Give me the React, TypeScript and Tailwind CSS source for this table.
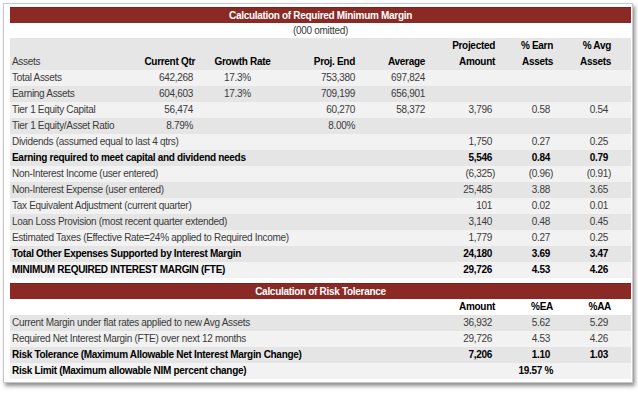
import React from "react";

type Row = {
  label: string;
  bold?: boolean;
  cq?: string;
  gr?: string;
  pe?: string;
  avg?: string;
  amt?: string;
  earn?: string;
  pavg?: string;
  span?: boolean;
};

const rows: Row[] = [
  { label: "Total Assets", cq: "642,268", gr: "17.3%", pe: "753,380", avg: "697,824" },
  { label: "Earning Assets", cq: "604,603", gr: "17.3%", pe: "709,199", avg: "656,901" },
  { label: "Tier 1 Equity Capital", cq: "56,474", pe: "60,270", avg: "58,372", amt: "3,796", earn: "0.58", pavg: "0.54" },
  { label: "Tier 1 Equity/Asset Ratio", cq: "8.79%", pe: "8.00%" },
  { label: "Dividends (assumed equal to last 4 qtrs)", span: true, amt: "1,750", earn: "0.27", pavg: "0.25" },
  { label: "Earning required to meet capital and dividend needs", span: true, bold: true, amt: "5,546", earn: "0.84", pavg: "0.79" },
  { label: "Non-Interest Income (user entered)", span: true, amt: "(6,325)", earn: "(0.96)", pavg: "(0.91)" },
  { label: "Non-Interest Expense (user entered)", span: true, amt: "25,485", earn: "3.88", pavg: "3.65" },
  { label: "Tax Equivalent Adjustment (current quarter)", span: true, amt: "101", earn: "0.02", pavg: "0.01" },
  { label: "Loan Loss Provision (most recent quarter extended)", span: true, amt: "3,140", earn: "0.48", pavg: "0.45" },
  { label: "Estimated Taxes (Effective Rate=24% applied to Required Income)", span: true, amt: "1,779", earn: "0.27", pavg: "0.25" },
  { label: "Total Other Expenses Supported by Interest Margin", span: true, bold: true, amt: "24,180", earn: "3.69", pavg: "3.47" },
  { label: "MINIMUM REQUIRED INTEREST MARGIN (FTE)", span: true, bold: true, amt: "29,726", earn: "4.53", pavg: "4.26" },
];

const riskRows = [
  { label: "Current Margin under flat rates applied to new Avg Assets", amt: "36,932", ea: "5.62", aa: "5.29" },
  { label: "Required Net Interest Margin (FTE) over next 12 months", amt: "29,726", ea: "4.53", aa: "4.26" },
  { label: "Risk Tolerance (Maximum Allowable Net Interest Margin Change)", amt: "7,206", ea: "1.10", aa: "1.03", bold: true },
  { label: "Risk Limit (Maximum allowable NIM percent change)", ea: "19.57 %", bold: true },
];

const grid = "grid grid-cols-[130px_55px_95px_65px_70px_70px_58px_58px_20px]";

// accounting style: positive numbers keep room for the closing paren
function Num({ v }: { v?: string }) {
  if (!v) return null;
  if (v.endsWith(")") || v.endsWith("%")) return <>{v}</>;
  return (
    <>
      {v}
      <span className="invisible">)</span>
    </>
  );
}

function Bar({ title }: { title: string }) {
  return (
    <div className="h-[16px] bg-[#8b2a25] text-white font-bold text-center leading-[16px] border-t border-[#7a221e]">{title}</div>
  );
}

export default function App() {
  return (
    <div className="w-[638px] h-[393px] bg-white pt-[3px] pl-[3px]" style={{ fontFamily: '"Liberation Sans", Arial, sans-serif' }}>
      <div className="w-[630px] border border-[#c9c9c9] bg-white shadow-[2px_3px_4px_rgba(0,0,0,0.45)] pl-[6px] pr-[1px] pt-[3px] pb-[3px] text-[10px] tracking-[-0.3px] text-[#3a3a3a]">
        <Bar title="Calculation of Required Minimum Margin" />
        <div className="h-[15px] leading-[15px] text-center">(000 omitted)</div>

        <div className={`${grid} bg-[#e6e6e6] h-[32px] leading-[16px] font-bold text-black whitespace-nowrap`}>
          <div className="row-start-2 pl-[2px] font-normal text-[#3a3a3a]">Assets</div>
          <div className="row-start-2 text-right">Current Qtr</div>
          <div className="row-start-2 text-center">Growth Rate</div>
          <div className="row-start-2 text-right">Proj. End</div>
          <div className="row-start-2 text-right">Average</div>
          <div className="row-start-1 col-start-6 text-right">Projected</div>
          <div className="row-start-1 col-start-7 text-right">% Earn</div>
          <div className="row-start-1 col-start-8 text-right">% Avg</div>
          <div className="row-start-2 col-start-6 text-right">Amount</div>
          <div className="row-start-2 col-start-7 text-right">Assets</div>
          <div className="row-start-2 col-start-8 text-right">Assets</div>
        </div>

        {rows.map((r, i) => (
          <div
            key={r.label}
            className={`${grid} h-[16px] leading-[16px] whitespace-nowrap ${i % 2 === 0 ? "bg-[#f2f2f2]" : "bg-[#e5e5e5]"} ${r.bold ? "font-bold text-black" : ""}`}
          >
            {r.span ? (
              <div className="col-span-5 pl-[2px]">{r.label}</div>
            ) : (
              <>
                <div className="pl-[2px]">{r.label}</div>
                <div className="text-right pr-[2px]">{r.cq}</div>
                <div className="pl-[29px]">{r.gr}</div>
                <div className="text-right">{r.pe}</div>
                <div className="text-right">{r.avg}</div>
              </>
            )}
            <div className="text-right"><Num v={r.amt} /></div>
            <div className="text-right"><Num v={r.earn} /></div>
            <div className="text-right"><Num v={r.pavg} /></div>
          </div>
        ))}

        <div className="h-[5px]" />
        <Bar title="Calculation of Risk Tolerance" />

        <div className={`${grid} h-[16px] leading-[16px] font-bold text-black`}>
          <div className="col-span-5" />
          <div className="text-right">Amount</div>
          <div className="text-right">%EA</div>
          <div className="text-right">%AA</div>
        </div>
        {riskRows.map((r, i) => (
          <div
            key={r.label}
            className={`${grid} h-[16px] leading-[16px] whitespace-nowrap ${i % 2 === 0 ? "bg-[#e5e5e5]" : "bg-[#f2f2f2]"} ${r.bold ? "font-bold text-black" : ""}`}
          >
            <div className="col-span-5 pl-[2px]">{r.label}</div>
            <div className="text-right"><Num v={r.amt} /></div>
            <div className="text-right"><Num v={r.ea} /></div>
            <div className="text-right"><Num v={r.aa} /></div>
          </div>
        ))}
      </div>
    </div>
  );
}
